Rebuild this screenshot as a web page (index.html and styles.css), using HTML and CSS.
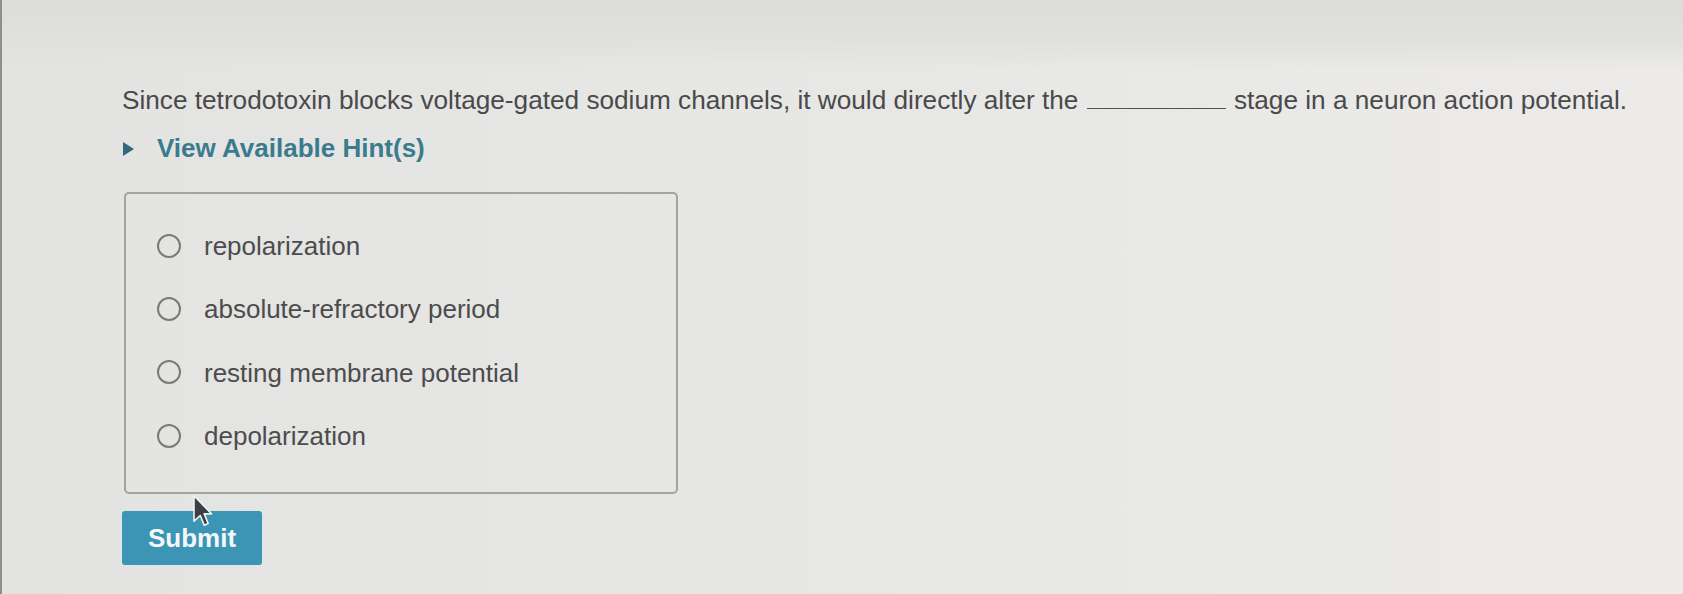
FILE: index.html
```html
<!DOCTYPE html>
<html lang="en">
<head>
<meta charset="utf-8">
<title>Question</title>
<link rel="stylesheet" href="styles.css">
</head>
<body>
<main class="item">
  <p class="question">Since tetrodotoxin blocks voltage-gated sodium channels, it would directly alter the <span class="blank"></span> stage in a neuron action potential.</p>

  <div class="hint">
    <span class="hint-arrow"></span>
    <span class="hint-label">View Available Hint(s)</span>
  </div>

  <form class="choices">
    <label class="choice"><span class="radio"></span><span class="choice-text">repolarization</span></label>
    <label class="choice"><span class="radio"></span><span class="choice-text">absolute-refractory period</span></label>
    <label class="choice"><span class="radio"></span><span class="choice-text">resting membrane potential</span></label>
    <label class="choice"><span class="radio"></span><span class="choice-text">depolarization</span></label>
  </form>

  <div class="actions">
    <button class="submit" type="button">Submit</button>
    <svg class="pointer" width="21" height="34" viewBox="0 0 18 30" aria-hidden="true">
      <path d="M1.5 1.5 L1.5 24 L7 19 L10.5 27.5 L14 26 L10.5 17.5 L17 17.5 Z" fill="#3c3f44" stroke="#f2f2f2" stroke-width="1.4" stroke-linejoin="round"/>
    </svg>
  </div>
</main>
</body>
</html>
```

FILE: styles.css
```css
html {
  background: #e6e6e4;
}

body {
  margin: 0;
  min-height: 594px;
  box-sizing: border-box;
  border-left: 2px solid #8e8e8c;
  background:
    linear-gradient(to bottom, #dcdcda 0, #e0e0de 40px, rgba(230, 230, 228, 0) 70px),
    linear-gradient(to right, #e3e3e1 0, #e7e7e5 50%, #ecebea 100%);
  font-family: "Liberation Sans", Arial, Helvetica, sans-serif;
  color: #4a4a4a;
}

.item {
  padding: 85px 0 0 120px;
}

.question {
  margin: 0;
  font-size: 26.2px;
  line-height: 30px;
  white-space: nowrap;
}

.blank {
  display: inline-block;
  width: 139px;
  height: 22px;
  margin: 0 1px;
  border-bottom: 1.5px solid #555;
  vertical-align: baseline;
}

.hint {
  display: flex;
  align-items: center;
  gap: 23px;
  margin-top: 18px;
  height: 30px;
  color: #3a7b8e;
  font-size: 26px;
  font-weight: bold;
}

.hint-arrow {
  width: 0;
  height: 0;
  border-top: 7px solid transparent;
  border-bottom: 7px solid transparent;
  border-left: 11px solid #33697a;
  margin-left: 1px;
  margin-top: 1px;
}

.choices {
  margin: 29px 0 0 2px;
  width: 554px;
  height: 302px;
  box-sizing: border-box;
  border: 2px solid #a3a3a1;
  border-radius: 5px;
  padding: 20px 0 0 31px;
  display: flex;
  flex-direction: column;
}

.choice {
  display: flex;
  align-items: center;
  height: 63.3px;
  font-size: 26px;
  color: #4c4c4c;
}

.radio {
  width: 24px;
  height: 24px;
  box-sizing: border-box;
  border: 2px solid #7a7a7a;
  border-radius: 50%;
  margin-right: 23px;
  flex: none;
}

.choice-text {
  margin-top: 2px;
}

.actions {
  position: relative;
  margin-top: 17px;
  width: 140px;
}

.submit {
  display: block;
  width: 140px;
  height: 54px;
  border: 0;
  border-radius: 3px;
  background: #3c95b4;
  color: #f4f7f8;
  font-family: "Liberation Sans", Arial, Helvetica, sans-serif;
  font-size: 26px;
  font-weight: bold;
  padding: 0;
}

.pointer {
  position: absolute;
  left: 70px;
  top: -17px;
}
```
